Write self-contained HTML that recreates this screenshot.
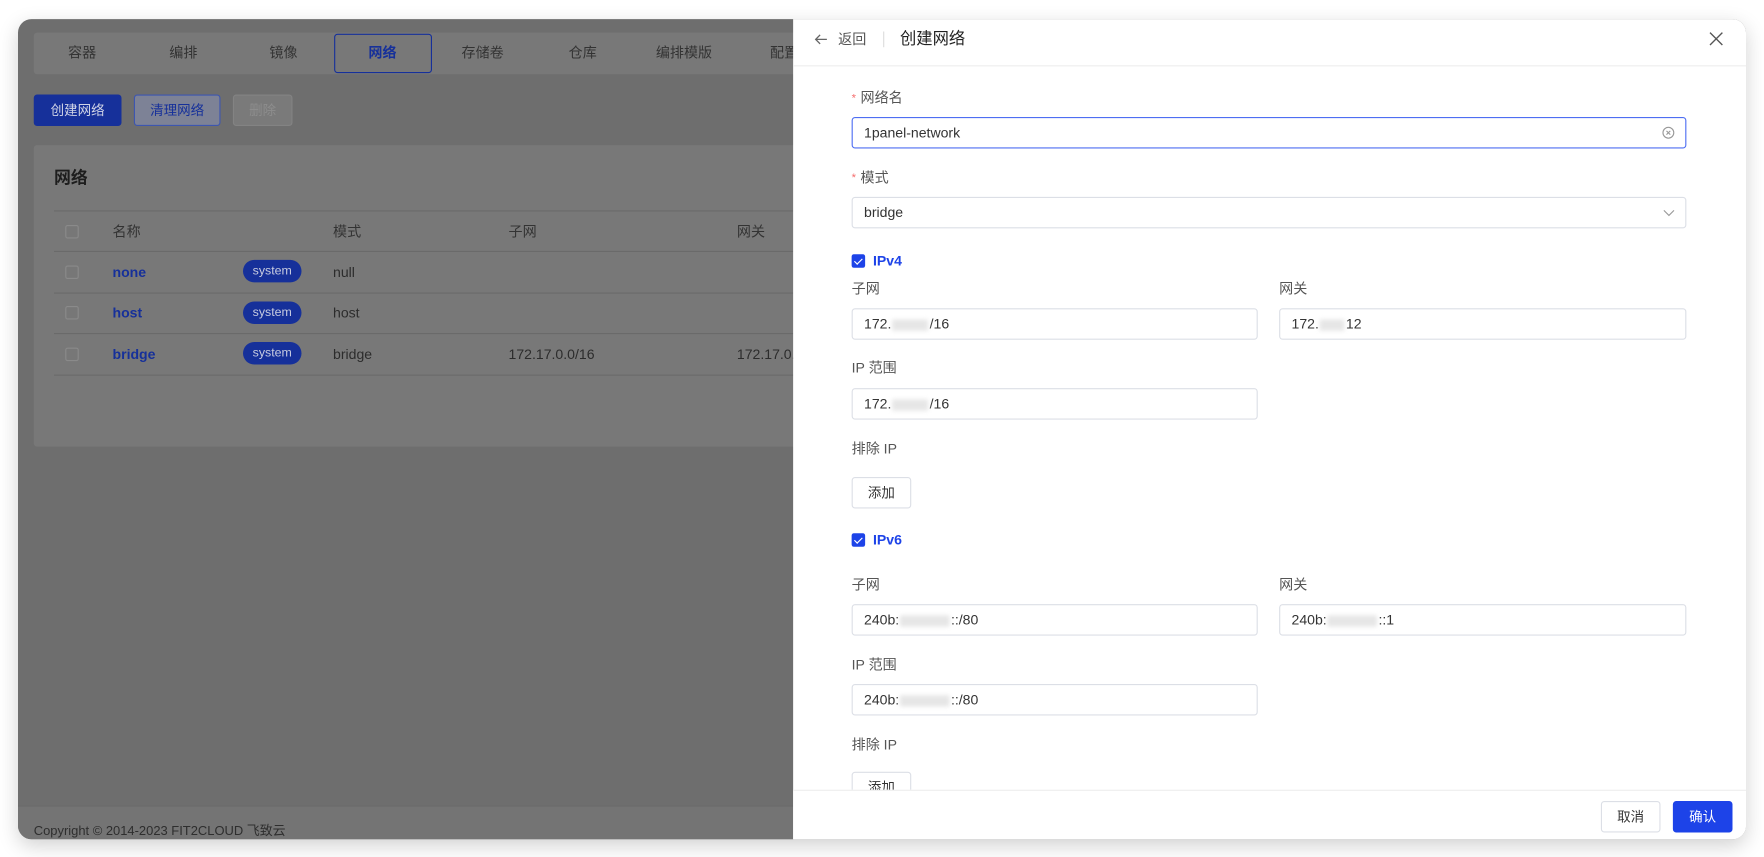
<!DOCTYPE html>
<html><head><meta charset="utf-8"><style>
*{box-sizing:border-box;margin:0;padding:0}
html,body{width:1764px;height:857px;overflow:hidden;background:#fff;font-family:"Liberation Sans","Noto Sans CJK SC",sans-serif}
#s{position:absolute;left:0;top:0;width:1568px;height:762px;transform:scale(1.125);transform-origin:0 0}
.win{position:absolute;left:16px;top:17px;width:1536px;height:729px;border-radius:12px;overflow:hidden;background:#6e6e6e;box-shadow:0 6px 18px rgba(0,0,0,.18)}
.a{position:absolute}
.tabs{left:14px;top:12px;width:700px;height:37px;background:#787878;border-radius:3px}
.tab{position:absolute;top:0;height:37px;line-height:37px;font-size:12.5px;color:#333;transform:translateX(-50%)}
.tabsel{left:281px;top:13px;width:87px;height:35px;border:1.5px solid #16309a;border-radius:3px}
.btn{position:absolute;height:28px;line-height:26px;font-size:12px;text-align:center;border-radius:3px}
.card{left:14px;top:112px;width:700px;height:268px;background:#787878;border-radius:3px}
.row{position:absolute;left:32px;width:700px;height:1px;background:#6a6a6a}
.cell{position:absolute;font-size:12.5px;color:#2c2c2c;line-height:16px}
.cb{position:absolute;width:12px;height:12px;border:1px solid #8a8a8a;border-radius:2px;background:#777}
.tag{position:absolute;left:200px;width:52px;height:20px;border-radius:10px;background:#16309a;color:#c8cce0;font-size:11px;text-align:center;line-height:20px}
.nm{color:#16309a;font-weight:bold}
.foot{left:0;top:699px;width:1536px;height:30px;background:#747474;border-top:1px solid #6b6b6b}
.dr{position:absolute;left:705px;top:17px;width:847px;height:729px;background:#fff;border-radius:0 12px 12px 0;overflow:hidden}
.lbl{position:absolute;left:52px;font-size:12.5px;color:#555;line-height:16px}
.inp{position:absolute;height:28px;border:1px solid #dcdfe6;border-radius:3px;font-size:12.5px;color:#333;line-height:26px;padding-left:10px;background:#fff}
.full{left:52px;width:742px}.l{left:52px;width:361px}.r{left:432px;width:362px}
.blur{display:inline-block;width:32px;height:10px;background:#e6e6e6;filter:blur(2px);vertical-align:middle;margin:0 1px}
.chk{position:absolute;left:52px;width:12px;height:12px;background:#1d43e8;border-radius:2px}
.chk:after{content:"";position:absolute;left:3.5px;top:1.5px;width:3px;height:6px;border:solid #fff;border-width:0 1.5px 1.5px 0;transform:rotate(45deg)}
.ck{position:absolute;left:71px;font-size:12.5px;color:#1d43e8;font-weight:bold;line-height:16px}
.ab{position:absolute;left:52px;width:53px;height:28px;border:1px solid #dcdfe6;border-radius:3px;font-size:12px;text-align:center;line-height:26px;color:#333;background:#fff}
.star{color:#f56c6c;font-size:10px;margin-right:4px;position:relative;top:-1px}
</style></head><body><div id="s">
<div class="win">
 <div class="a tabs">
  <span class="tab" style="left:43px">容器</span><span class="tab" style="left:133px">编排</span><span class="tab" style="left:222px">镜像</span><span class="tab" style="left:310px;color:#16309a;font-weight:bold">网络</span><span class="tab" style="left:399px">存储卷</span><span class="tab" style="left:488px">仓库</span><span class="tab" style="left:578px">编排模版</span><span class="tab" style="left:667px">配置</span>
 </div>
 <div class="a tabsel"></div>
 <div class="btn" style="left:14px;top:67px;width:78px;background:#16309a;color:#d0d4e6;border:1px solid #16309a">创建网络</div>
 <div class="btn" style="left:103px;top:67px;width:77px;background:#7d8296;color:#16309a;border:1px solid #3d56b0">清理网络</div>
 <div class="btn" style="left:191px;top:67px;width:53px;background:#7a7a7a;color:#8d8d8d;border:1px solid #838383">删除</div>
 <div class="a card"></div>
 <div class="cell" style="left:32px;top:134px;font-size:15px;font-weight:bold;color:#1e1e1e">网络</div>
 <div class="row" style="top:170px;width:682px"></div>
 <div class="row" style="top:206px;width:682px"></div>
 <div class="row" style="top:243px;width:682px"></div>
 <div class="row" style="top:279px;width:682px"></div>
 <div class="row" style="top:316px;width:682px"></div>
 <div class="cb" style="left:42px;top:183px"></div>
 <div class="cell" style="left:84px;top:181px;color:#333">名称</div><div class="cell" style="left:280px;top:181px;color:#333">模式</div><div class="cell" style="left:436px;top:181px;color:#333">子网</div><div class="cell" style="left:639px;top:181px;color:#333">网关</div>
 <div class="cb" style="left:42px;top:219px"></div><div class="cell nm" style="left:84px;top:217px">none</div><div class="tag" style="top:214px">system</div><div class="cell" style="left:280px;top:217px">null</div>
 <div class="cb" style="left:42px;top:255px"></div><div class="cell nm" style="left:84px;top:253px">host</div><div class="tag" style="top:251px">system</div><div class="cell" style="left:280px;top:253px">host</div>
 <div class="cb" style="left:42px;top:292px"></div><div class="cell nm" style="left:84px;top:290px">bridge</div><div class="tag" style="top:287px">system</div><div class="cell" style="left:280px;top:290px">bridge</div><div class="cell" style="left:436px;top:290px">172.17.0.0/16</div><div class="cell" style="left:639px;top:290px">172.17.0.1</div>
 <div class="a foot"><span style="position:absolute;left:14px;top:13px;font-size:11.5px;color:#2e2e2e">Copyright © 2014-2023 FIT2CLOUD 飞致云</span></div>
</div>
<div class="dr">
 <svg class="a" style="left:18px;top:11px" width="14" height="14" viewBox="0 0 14 14"><path d="M12 7H2M6 3L2 7l4 4" fill="none" stroke="#666" stroke-width="1.1"/></svg>
 <div class="a" style="left:40px;top:10px;font-size:12.5px;color:#555;line-height:16px">返回</div>
 <div class="a" style="left:80px;top:11px;width:1px;height:14px;background:#ddd"></div>
 <div class="a" style="left:95px;top:9px;font-size:14.5px;color:#222;line-height:18px">创建网络</div>
 <svg class="a" style="left:814px;top:11px" width="13" height="13" viewBox="0 0 13 13"><path d="M1 1l11 11M12 1L1 12" stroke="#555" stroke-width="1.2"/></svg>
 <div class="a" style="left:0;top:41px;width:847px;height:1px;background:#eee"></div>
 <div class="lbl" style="top:62px"><span class="star">*</span>网络名</div>
 <div class="inp full" style="top:87px;border-color:#4e6ef2">1panel-network<svg style="position:absolute;right:9px;top:7px" width="12" height="12" viewBox="0 0 12 12"><circle cx="6" cy="6" r="4.8" fill="none" stroke="#999"/><path d="M4.3 4.3l3.4 3.4M7.7 4.3L4.3 7.7" stroke="#999"/></svg></div>
 <div class="lbl" style="top:133px"><span class="star">*</span>模式</div>
 <div class="inp full" style="top:158px">bridge<svg style="position:absolute;right:9px;top:9px" width="11" height="8" viewBox="0 0 11 8"><path d="M1 2l4.5 4.5L10 2" fill="none" stroke="#999"/></svg></div>
 <div class="chk" style="top:209px"></div><div class="ck" style="top:207px">IPv4</div>
 <div class="lbl" style="top:232px">子网</div><div class="lbl" style="top:232px;left:432px">网关</div>
 <div class="inp l" style="top:257px">172.<span class="blur"></span>/16</div>
 <div class="inp r" style="top:257px">172.<span class="blur" style="width:22px"></span>12</div>
 <div class="lbl" style="top:302px">IP 范围</div>
 <div class="inp l" style="top:328px">172.<span class="blur"></span>/16</div>
 <div class="lbl" style="top:374px">排除 IP</div>
 <div class="ab" style="top:407px">添加</div>
 <div class="chk" style="top:457px"></div><div class="ck" style="top:455px">IPv6</div>
 <div class="lbl" style="top:495px">子网</div><div class="lbl" style="top:495px;left:432px">网关</div>
 <div class="inp l" style="top:520px">240b:<span class="blur" style="width:44px"></span>::/80</div>
 <div class="inp r" style="top:520px">240b:<span class="blur" style="width:44px"></span>::1</div>
 <div class="lbl" style="top:566px">IP 范围</div>
 <div class="inp l" style="top:591px">240b:<span class="blur" style="width:44px"></span>::/80</div>
 <div class="lbl" style="top:637px">排除 IP</div>
 <div class="ab" style="top:669px">添加</div>
 <div class="a" style="left:0;top:685px;width:847px;height:44px;background:#fff;border-top:1px solid #eee"></div>
 <div class="btn" style="left:718px;top:695px;width:53px;border:1px solid #dcdfe6;color:#333;background:#fff">取消</div>
 <div class="btn" style="left:782px;top:695px;width:53px;background:#1d43e8;color:#fff;border:1px solid #1d43e8">确认</div>
</div>
</div></body></html>
